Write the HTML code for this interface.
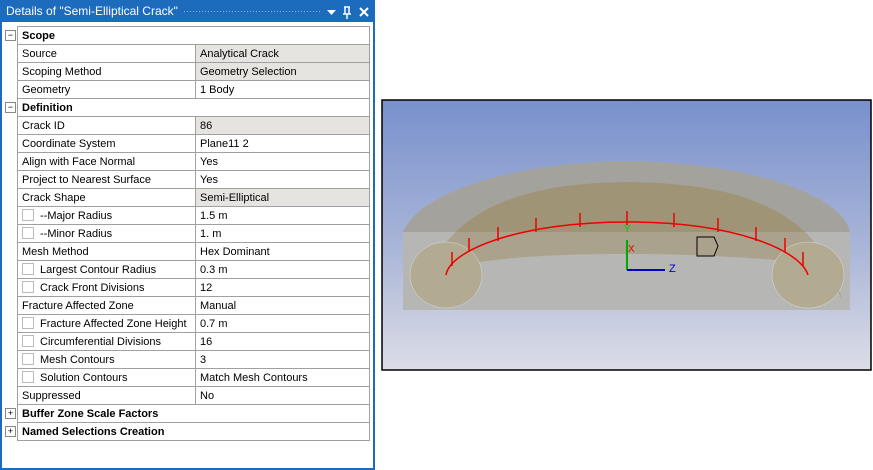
<!DOCTYPE html>
<html><head><style>
body{margin:0;width:873px;height:470px;background:#fff;position:relative;overflow:hidden;font-family:"Liberation Sans",sans-serif;font-size:11px;color:#000}
#panel{position:absolute;left:0;top:0;width:375px;height:470px;background:#1c6bbd}
#title{position:absolute;left:6px;top:4px;color:#fff;font-size:12px}
#dots{position:absolute;left:183px;top:10px;width:138px;height:3px;background-image:radial-gradient(#7fb0e3 0.7px,transparent 0.8px);background-size:3px 3px}
#inner{position:absolute;left:2px;top:22px;width:371px;height:446px;background:#fff}
table{position:absolute;left:17px;top:26px;border-collapse:collapse;width:353px}
td{border:1px solid #a0a0a0;height:17px;padding:0 0 0 4px;white-space:nowrap;font-size:11px}
td.v{width:169px}
td.g{background:#e6e4e0}
.hd td{font-weight:bold}
.cb{display:inline-block;width:10px;height:10px;border:1px solid #bbb;background:#fff;vertical-align:-2px;margin-right:6px}
.pm{position:absolute;left:5px;width:9px;height:9px;border:1px solid #888;background:#fff;font-size:9px;line-height:9px;text-align:center;color:#000}
</style></head><body>
<div id="panel"><div id="inner"></div>
<div id="title">Details of "Semi-Elliptical Crack"</div><div id="dots"></div>
<svg style="position:absolute;left:325px;top:4px" width="50" height="16"><path d="M2 6h9l-4.5 5z" fill="#fff"/><path d="M19 3h6M20 3v7M24 3v7M18 10h8M22 10v5" stroke="#fff" stroke-width="1.5" fill="none"/><path d="M35 4l8 8M43 4l-8 8" stroke="#fff" stroke-width="2"/></svg>
</div>
<div class="pm" style="top:30px">−</div>
<div class="pm" style="top:102px">−</div>
<div class="pm" style="top:408px">+</div>
<div class="pm" style="top:426px">+</div>
<table>
<tr class="hd"><td colspan="2">Scope</td></tr>
<tr><td>Source</td><td class="v g">Analytical Crack</td></tr>
<tr><td>Scoping Method</td><td class="v g">Geometry Selection</td></tr>
<tr><td>Geometry</td><td class="v">1 Body</td></tr>
<tr class="hd"><td colspan="2">Definition</td></tr>
<tr><td>Crack ID</td><td class="v g">86</td></tr>
<tr><td>Coordinate System</td><td class="v">Plane11 2</td></tr>
<tr><td>Align with Face Normal</td><td class="v">Yes</td></tr>
<tr><td>Project to Nearest Surface</td><td class="v">Yes</td></tr>
<tr><td>Crack Shape</td><td class="v g">Semi-Elliptical</td></tr>
<tr><td><span class="cb"></span>--Major Radius</td><td class="v">1.5 m</td></tr>
<tr><td><span class="cb"></span>--Minor Radius</td><td class="v">1. m</td></tr>
<tr><td>Mesh Method</td><td class="v">Hex Dominant</td></tr>
<tr><td><span class="cb"></span>Largest Contour Radius</td><td class="v">0.3 m</td></tr>
<tr><td><span class="cb"></span>Crack Front Divisions</td><td class="v">12</td></tr>
<tr><td>Fracture Affected Zone</td><td class="v">Manual</td></tr>
<tr><td><span class="cb"></span>Fracture Affected Zone Height</td><td class="v">0.7 m</td></tr>
<tr><td><span class="cb"></span>Circumferential Divisions</td><td class="v">16</td></tr>
<tr><td><span class="cb"></span>Mesh Contours</td><td class="v">3</td></tr>
<tr><td><span class="cb"></span>Solution Contours</td><td class="v">Match Mesh Contours</td></tr>
<tr><td>Suppressed</td><td class="v">No</td></tr>
<tr class="hd"><td colspan="2">Buffer Zone Scale Factors</td></tr>
<tr class="hd"><td colspan="2">Named Selections Creation</td></tr>
</table>
<svg style="position:absolute;left:381px;top:99px" width="492" height="272" viewBox="381 99 492 272">
<defs><linearGradient id="bg" x1="0" y1="0" x2="0" y2="1"><stop offset="0" stop-color="#7890cc"/><stop offset="0.55" stop-color="#aab6d8"/><stop offset="1" stop-color="#dcdde6"/></linearGradient></defs>
<rect x="382" y="100" width="489" height="270" fill="url(#bg)" stroke="#000" stroke-width="1.5"/>
<path d="M403 232 C420 190 520 162 627 161 C735 162 840 190 850 232 L850 310 L403 310 Z" fill="#b0b0ae"/>
<path d="M403 232 C420 190 520 162 627 161 C735 162 840 190 850 232 Z" fill="#a4a29c"/>
<path d="M420 300 C440 200 540 183 627 182 C720 183 820 200 842 300 C830 270 800 262 780 260 C720 256 680 254 627 254 C570 254 520 256 480 262 C455 266 430 280 420 300Z" fill="#a09476"/>
<rect x="403" y="232" width="447" height="78" fill="#c4c4c2" opacity="0.3"/>
<ellipse cx="446" cy="275" rx="36" ry="33" fill="#b3aa92" stroke="#ddd" stroke-width="0.5"/>
<ellipse cx="808" cy="275" rx="36" ry="33" fill="#b3aa92" stroke="#ddd" stroke-width="0.5"/>
<path d="M446 275 C450 250 520 222 627 222 C735 222 800 250 808 275" fill="none" stroke="#e00" stroke-width="1.5"/>
<g stroke="#e00" stroke-width="1.5"><path d="M452 252v14M469 238v14M498 227v14M536 218v14M580 213v14M627 211v14M674 213v14M718 218v14M756 227v14M785 238v14M803 252v14"/></g>
<path d="M697 237h17l4 9-4 10h-17z" fill="none" stroke="#000"/>
<path d="M627 270v-30" stroke="#0a0" stroke-width="2"/><path d="M627 270h38" stroke="#00c" stroke-width="2"/>
<text x="624" y="232" fill="#0c0" font-size="10">Y</text><text x="628" y="252" fill="#e00" font-size="10">X</text><text x="669" y="272" fill="#00c" font-size="11">Z</text>
</svg>
</body></html>
